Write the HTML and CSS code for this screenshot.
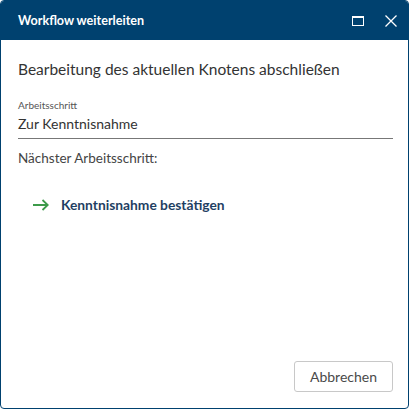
FILE: index.html
```html
<!DOCTYPE html>
<html lang="de">
<head>
<meta charset="utf-8">
<title>Workflow weiterleiten</title>
<link rel="stylesheet" href="styles.css">
</head>
<body>
<div class="dialog">
  <div class="titlebar">
    <span class="title">Workflow weiterleiten</span>
    <span class="actions">
      <svg class="icon" width="12" height="10" viewBox="0 0 12 10"><rect x="0.5" y="0.5" width="11" height="9" fill="none" stroke="#fff" stroke-width="1"/><rect x="0" y="0" width="12" height="2" fill="#fff"/></svg>
      <svg class="icon close" width="12" height="12" viewBox="0 0 12 12"><path d="M0.5 0.5 L11.5 11.5 M11.5 0.5 L0.5 11.5" stroke="#fff" stroke-width="1.3" fill="none"/></svg>
    </span>
  </div>
  <div class="content">
    <h1 class="heading">Bearbeitung des aktuellen Knotens abschließen</h1>
    <div class="field">
      <div class="field-label">Arbeitsschritt</div>
      <div class="field-value">Zur Kenntnisnahme</div>
    </div>
    <div class="next-label">Nächster Arbeitsschritt:</div>
    <div class="option">
      <svg class="arrow" width="16" height="12" viewBox="0 0 16 12"><path d="M0 6 H14.5 M9.5 1 L14.8 6 L9.5 11" stroke="#3d9b4a" stroke-width="1.8" fill="none"/></svg>
      <span class="option-text">Kenntnisnahme bestätigen</span>
    </div>
  </div>
  <div class="footer">
    <button class="btn">Abbrechen</button>
  </div>
</div>
</body>
</html>
```
FILE: styles.css
```css
html, body {
  margin: 0;
  padding: 0;
  background: #ffffff;
}
body {
  font-family: Lato, "Noto Sans", sans-serif;
}
.dialog {
  width: 409px;
  height: 409px;
  box-sizing: border-box;
  border: 1px solid #00416f;
  border-radius: 4px;
  overflow: hidden;
  display: flex;
  flex-direction: column;
  background: #fff;
}
.titlebar {
  height: 39px;
  background: #00416f;
  display: flex;
  align-items: center;
  justify-content: space-between;
  padding: 0 11px 0 17px;
  flex-shrink: 0;
}
.title {
  color: #fff;
  font-size: 12.6px;
  font-weight: 700;
}
.actions {
  display: flex;
  align-items: center;
  gap: 21px;
}
.icon { display: block; }
.content {
  flex: 1;
  padding: 0 15px 0 17px;
}
.heading {
  margin: 20px 0 0 0;
  font-size: 15.5px;
  font-weight: 400;
  color: #333;
}
.field {
  margin-top: 21px;
  border-bottom: 1px solid #777;
  padding-bottom: 6px;
}
.field-label {
  font-size: 10px;
  color: #555;
}
.field-value {
  font-size: 14px;
  color: #333;
  margin-top: 4px;
}
.next-label {
  margin-top: 11px;
  font-size: 13.5px;
  color: #444;
}
.option {
  margin-top: 30px;
  margin-left: 15px;
  display: flex;
  align-items: center;
  gap: 12px;
}
.arrow { display: block; }
.option-text {
  font-size: 13.8px;
  font-weight: 700;
  color: #1f3f63;
}
.footer {
  display: flex;
  justify-content: flex-end;
  padding: 0 15px 16px 0;
}
.btn {
  width: 99px;
  height: 31px;
  border: 1px solid #c8c8c8;
  border-radius: 3px;
  background: #fff;
  font-family: Lato, "Noto Sans", sans-serif;
  font-size: 14px;
  color: #4a4a4a;
}
```
